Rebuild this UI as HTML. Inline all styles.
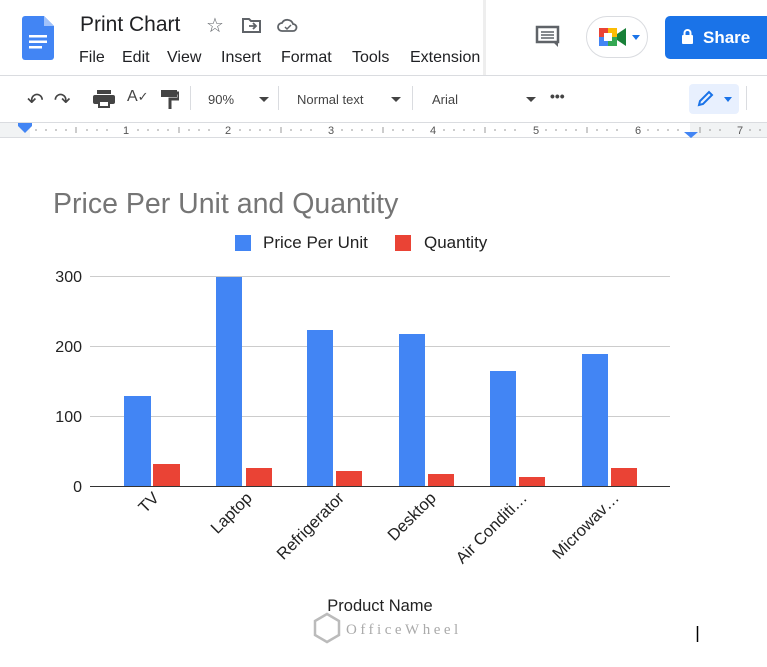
<!DOCTYPE html><html><head><style>
body{margin:0;width:767px;height:667px;overflow:hidden;background:#fff;font-family:"Liberation Sans",Arial,sans-serif;position:relative}
.a{position:absolute}
.menu span{position:absolute;top:0}
</style></head><body>
<svg class="a" style="left:22px;top:16px" width="32" height="44" viewBox="0 0 32 44"><path d="M3 0h19l10 10v31a3 3 0 0 1-3 3H3a3 3 0 0 1-3-3V3a3 3 0 0 1 3-3z" fill="#4285f4"/><path d="M22 0v10h10z" fill="#a1c2fa"/><rect x="7" y="19" width="18" height="2.5" fill="#fff"/><rect x="7" y="24.5" width="18" height="2.5" fill="#fff"/><rect x="7" y="30" width="13" height="2.5" fill="#fff"/></svg>
<div class="a" style="left:80px;top:13px;font-size:21px;color:#202124">Print Chart</div>
<div class="a" style="left:206px;top:13px;font-size:20px;color:#5f6368">☆</div>
<svg class="a" style="left:242px;top:17px" width="20" height="16"><path d="M1 2h6l2 2h9v11H1z" fill="none" stroke="#5f6368" stroke-width="2"/><path d="M7 9h7M11 6l3 3-3 3" fill="none" stroke="#5f6368" stroke-width="1.8"/></svg>
<svg class="a" style="left:277px;top:17px" width="22" height="16"><path d="M5 14a4 4 0 0 1 0-8 6 6 0 0 1 11 1 3.5 3.5 0 0 1 0 7z" fill="none" stroke="#5f6368" stroke-width="1.8"/><path d="M8 10l2 2 4-4" fill="none" stroke="#5f6368" stroke-width="1.5"/></svg>
<div class="a menu" style="left:0;top:49px;font-size:16px;color:#202124;white-space:nowrap"><span style="left:79px">File</span><span style="left:122px">Edit</span><span style="left:167px">View</span><span style="left:221px">Insert</span><span style="left:281px">Format</span><span style="left:352px">Tools</span><span style="left:410px">Extension</span></div>
<div class="a" style="left:483px;top:0;width:3px;height:76px;background:#eee"></div>
<svg class="a" style="left:535px;top:25px" width="26" height="24"><rect x="2" y="2" width="21" height="15" fill="none" stroke="#5f6368" stroke-width="2.5"/><path d="M6 7h13M6 10h13M6 13h13" stroke="#5f6368" stroke-width="1.5"/><path d="M18 17h5v5z" fill="#5f6368"/></svg>
<div class="a" style="left:586px;top:16px;width:62px;height:42px;border:1px solid #dadce0;border-radius:22px;box-sizing:border-box"></div>
<svg class="a" style="left:598px;top:26px" width="30" height="24"><rect x="1" y="2" width="18" height="18" fill="#34a853"/><rect x="1" y="2" width="9" height="9" fill="#ea4335"/><rect x="10" y="2" width="9" height="9" fill="#fbbc04"/><rect x="1" y="11" width="9" height="9" fill="#4285f4"/><rect x="6" y="7" width="8" height="8" fill="#fff"/><path d="M19 8l9-6v18l-9-6z" fill="#188038"/></svg>
<div class="a" style="left:632px;top:35px;border:4px solid transparent;border-top:5px solid #1a73e8"></div>
<div class="a" style="left:665px;top:16px;width:110px;height:43px;background:#1a73e8;border-radius:5px;color:#fff;font-size:17px;font-weight:bold;line-height:43px;padding-left:38px;box-sizing:border-box">Share</div>
<svg class="a" style="left:681px;top:29px" width="13" height="16"><rect x="1" y="6" width="11" height="9" rx="1" fill="#fff"/><path d="M3.5 6V4a3 3 0 0 1 6 0v2" fill="none" stroke="#fff" stroke-width="2"/></svg>
<div class="a" style="left:0;top:75px;width:767px;height:1px;background:#dadce0"></div>
<div class="a" style="left:27px;top:88px;font-size:20px;color:#444;letter-spacing:10px;white-space:nowrap">↶↷</div>
<svg class="a" style="left:93px;top:90px" width="22" height="18"><rect x="4" y="0" width="14" height="4" fill="#444"/><rect x="0" y="5" width="22" height="9" rx="2" fill="#444"/><rect x="5" y="11" width="12" height="7" fill="#444"/><rect x="7" y="12" width="8" height="4" fill="#fff"/></svg>
<div class="a" style="left:127px;top:88px;font-size:16px;color:#444">A<span style="font-size:13px">✓</span></div>
<svg class="a" style="left:161px;top:90px" width="18" height="20"><rect x="0" y="0" width="16" height="7" fill="#444"/><path d="M16 3h2v6H9v10" fill="none" stroke="#444" stroke-width="3"/></svg>
<div class="a" style="left:190px;top:86px;width:1px;height:24px;background:#dadce0"></div>
<div class="a" style="left:208px;top:92px;font-size:13px;color:#444">90%</div>
<div class="a" style="left:259px;top:97px;border:5px solid transparent;border-top:5px solid #444"></div>
<div class="a" style="left:278px;top:86px;width:1px;height:24px;background:#dadce0"></div>
<div class="a" style="left:297px;top:92px;font-size:13px;color:#444">Normal text</div>
<div class="a" style="left:391px;top:97px;border:5px solid transparent;border-top:5px solid #444"></div>
<div class="a" style="left:412px;top:86px;width:1px;height:24px;background:#dadce0"></div>
<div class="a" style="left:432px;top:92px;font-size:13px;color:#444">Arial</div>
<div class="a" style="left:526px;top:97px;border:5px solid transparent;border-top:5px solid #444"></div>
<div class="a" style="left:550px;top:88px;font-size:14px;color:#444;font-weight:bold">•••</div>
<div class="a" style="left:689px;top:84px;width:50px;height:30px;background:#e8f0fe;border-radius:4px"></div>
<svg class="a" style="left:696px;top:90px" width="20" height="18"><path d="M3 15l1-4 9-9 3 3-9 9z" fill="none" stroke="#1a73e8" stroke-width="2"/></svg>
<div class="a" style="left:724px;top:97px;border:4px solid transparent;border-top:5px solid #1a73e8"></div>
<div class="a" style="left:746px;top:86px;width:1px;height:24px;background:#dadce0"></div>
<div class="a" style="left:0;top:122px;width:767px;height:16px;background:#f1f3f4;border-top:1px solid #dadce0;border-bottom:1px solid #dadce0;box-sizing:border-box"></div>
<div class="a" style="left:30px;top:123px;width:660px;height:14px;background:#fff"></div>
<svg class="a" style="left:0;top:122px" width="767" height="16" font-size="11" fill="#555" font-family="Liberation Sans">
<g stroke="#999"><path d="M36 7v2M46 7v2M56 7v2M66 7v2M76 5v6M87 7v2M97 7v2M107 7v2M138 7v2M148 7v2M158 7v2M168 7v2M179 5v6M189 7v2M199 7v2M209 7v2M240 7v2M250 7v2M260 7v2M270 7v2M281 5v6M291 7v2M301 7v2M311 7v2M342 7v2M352 7v2M362 7v2M372 7v2M383 5v6M393 7v2M403 7v2M413 7v2M444 7v2M454 7v2M464 7v2M474 7v2M485 5v6M495 7v2M505 7v2M515 7v2M546 7v2M556 7v2M566 7v2M576 7v2M587 5v6M597 7v2M607 7v2M617 7v2M648 7v2M658 7v2M668 7v2M678 7v2M700 5v6M710 7v2M720 7v2M750 7v2M760 7v2"/></g>
<text x="123" y="12">1</text><text x="225" y="12">2</text><text x="328" y="12">3</text><text x="430" y="12">4</text><text x="533" y="12">5</text><text x="635" y="12">6</text><text x="737" y="12">7</text>
<path d="M18 4h14l-7 7z" fill="#4285f4"/><rect x="18" y="1" width="14" height="3" fill="#4285f4"/><path d="M684 10h14l-7 6z" fill="#4285f4"/></svg>
<svg class="a" style="left:0;top:138px" width="767" height="529" font-family="Liberation Sans">
<g transform="translate(0,-138)">
<text x="53" y="213" font-size="28.5" fill="#757575">Price Per Unit and Quantity</text>
<rect x="235" y="235" width="16" height="16" fill="#4285f4"/><text x="263" y="248" font-size="17" fill="#222">Price Per Unit</text>
<rect x="395" y="235" width="16" height="16" fill="#ea4335"/><text x="424" y="248" font-size="17" fill="#222">Quantity</text>
<g stroke="#ccc"><path d="M90 276.5h580M90 346.5h580M90 416.5h580"/></g>
<g font-size="16" fill="#222" text-anchor="end"><text x="82" y="282">300</text><text x="82" y="352">200</text><text x="82" y="422">100</text><text x="82" y="492">0</text></g>
<g fill="#4285f4"><rect x="124" y="396" width="27" height="90"/><rect x="216" y="277" width="26" height="209"/><rect x="307" y="330" width="26" height="156"/><rect x="399" y="334" width="26" height="152"/><rect x="490" y="371" width="26" height="115"/><rect x="582" y="354" width="26" height="132"/></g>
<g fill="#ea4335"><rect x="153" y="464" width="27" height="22"/><rect x="246" y="468" width="26" height="18"/><rect x="336" y="471" width="26" height="15"/><rect x="428" y="474" width="26" height="12"/><rect x="519" y="477" width="26" height="9"/><rect x="611" y="468" width="26" height="18"/></g>
<path d="M90 486.5h580" stroke="#333"/>
<g font-size="16.5" fill="#222" text-anchor="end">
<text transform="translate(160,499) rotate(-45)">TV</text>
<text transform="translate(253,499) rotate(-45)">Laptop</text>
<text transform="translate(345,499) rotate(-45)">Refrigerator</text>
<text transform="translate(437,499) rotate(-45)">Desktop</text>
<text transform="translate(528,499) rotate(-45)">Air Conditi…</text>
<text transform="translate(620,499) rotate(-45)">Microwav…</text></g>
<text x="380" y="611" font-size="16.5" fill="#222" text-anchor="middle">Product Name</text>
<path d="M327 614l12 7v14l-12 7-12-7v-14z" fill="none" stroke="#bbb" stroke-width="2.5"/>
<text x="346" y="634" font-size="15" fill="#aaa" font-family="Liberation Serif" letter-spacing="3.5">OfficeWheel</text>
<path d="M697.5 626v16" stroke="#000" stroke-width="1.5"/>
</g></svg>
</body></html>
